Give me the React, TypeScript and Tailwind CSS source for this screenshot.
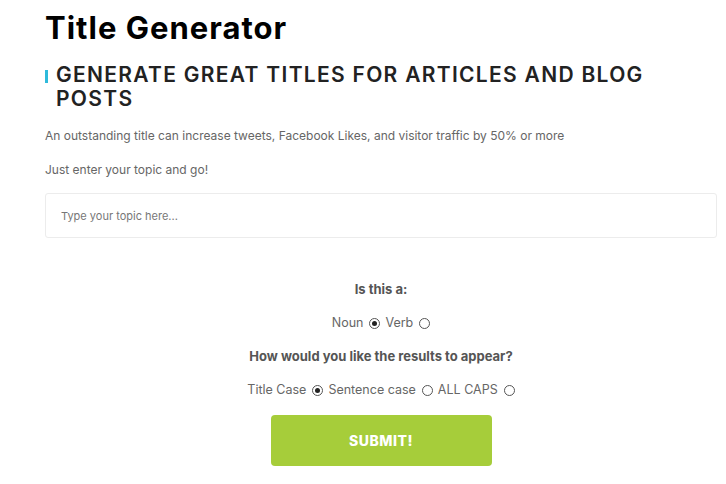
import { useState } from "react";

function Radio({ checked, onClick }: { checked: boolean; onClick: () => void }) {
  return (
    <button
      onClick={onClick}
      className="w-[11px] h-[11px] rounded-full border border-[#555] flex items-center justify-center bg-white"
    >
      {checked && <span className="w-[5px] h-[5px] rounded-full bg-[#222]" />}
    </button>
  );
}

export default function App() {
  const [kind, setKind] = useState("noun");
  const [style, setStyle] = useState("title");

  const kinds = [
    { id: "noun", label: "Noun" },
    { id: "verb", label: "Verb" },
  ];
  const styles = [
    { id: "title", label: "Title Case" },
    { id: "sentence", label: "Sentence case" },
    { id: "caps", label: "ALL CAPS" },
  ];

  return (
    <div className="min-h-screen bg-white font-['Inter',sans-serif] pl-[45px] pr-[9px] pt-[10px]">
      <h1 className="text-[31px] font-bold text-black leading-[36px] tracking-[1px]">
        Title Generator
      </h1>

      <div className="flex items-start gap-[8px] mt-[17px]">
        <span className="mt-[7px] w-[3px] h-[13px] bg-[#2fbadb] shrink-0" />
        <h2 className="text-[21px] font-semibold text-[#222] leading-[24px] uppercase tracking-[1.3px] pr-[40px]">
          Generate great titles for articles and blog posts
        </h2>
      </div>

      <p className="mt-[16px] text-[12px] text-[#666] leading-[18px]">
        An outstanding title can increase tweets, Facebook Likes, and visitor traffic by 50% or more
      </p>
      <p className="mt-[16px] text-[12px] text-[#666] leading-[18px]">
        Just enter your topic and go!
      </p>

      <input
        type="text"
        placeholder="Type your topic here..."
        className="mt-[14px] w-full h-[45px] border border-[#ececec] rounded-[3px] px-[15px] text-[11px] text-[#333] placeholder:text-[#777] outline-none"
      />

      <div className="flex flex-col items-center mt-[42px] text-[12.5px] text-[#666]">
        <p className="font-bold text-[#555] text-[13px] leading-[18px]">Is this a:</p>
        <div className="flex items-center gap-[5px] mt-[16px] leading-[18px]">
          {kinds.map((k) => (
            <span key={k.id} className="flex items-center gap-[6px]">
              {k.label}
              <Radio checked={kind === k.id} onClick={() => setKind(k.id)} />
            </span>
          ))}
        </div>
        <p className="font-bold text-[#555] text-[13px] leading-[18px] mt-[15px]">
          How would you like the results to appear?
        </p>
        <div className="flex items-center gap-[5px] mt-[16px] leading-[18px]">
          {styles.map((s) => (
            <span key={s.id} className="flex items-center gap-[6px]">
              {s.label}
              <Radio checked={style === s.id} onClick={() => setStyle(s.id)} />
            </span>
          ))}
        </div>
        <button className="mt-[16px] w-[221px] h-[51px] rounded-[4px] bg-[#a6cd3a] text-white font-extrabold text-[14px] tracking-[0.5px] uppercase">
          Submit!
        </button>
      </div>
    </div>
  );
}
